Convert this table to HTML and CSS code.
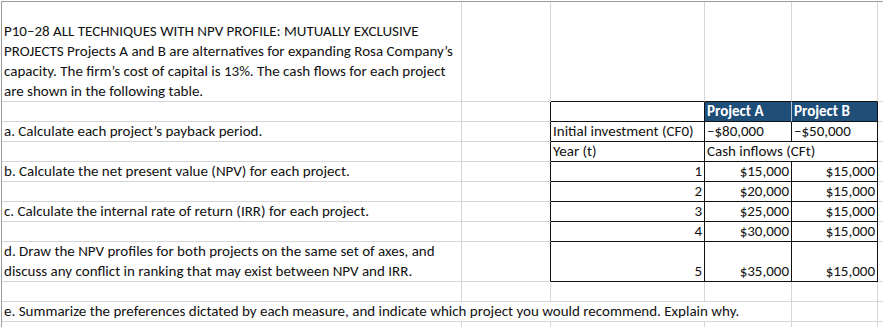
FILE: index.html
```html
<!DOCTYPE html>
<html>
<head>
<meta charset="utf-8">
<link rel="stylesheet" href="styles.css">
</head>
<body>
<div class="sheet">
  <!-- row 1 -->
  <div class="c wrap"><span>P10–28 ALL TECHNIQUES WITH NPV PROFILE: MUTUALLY EXCLUSIVE</span><span>PROJECTS Projects A and B are alternatives for expanding Rosa Company’s</span><span>capacity. The firm’s cost of capital is 13%. The cash flows for each project</span><span>are shown in the following table.</span></div>
  <div class="c"></div>
  <div class="c tb"></div>
  <div class="c tb"></div>
  <div class="c tb"></div>
  <div class="c"></div>
  <!-- row 2 -->
  <div class="c"></div>
  <div class="c tl"></div>
  <div class="c tt"></div>
  <div class="c tt head hsep">Project A</div>
  <div class="c tt tr head">Project B</div>
  <div class="c"></div>
  <!-- row 3 -->
  <div class="c">a. Calculate each project’s payback period.</div>
  <div class="c tl"></div>
  <div class="c tt">Initial investment (CF0)</div>
  <div class="c tt">–$80,000</div>
  <div class="c tt tr">–$50,000</div>
  <div class="c"></div>
  <!-- row 4 -->
  <div class="c"></div>
  <div class="c tl"></div>
  <div class="c tt">Year (t)</div>
  <div class="c tt tr span2">Cash inflows (CFt)</div>
  <div class="c"></div>
  <!-- row 5 -->
  <div class="c">b. Calculate the net present value (NPV) for each project.</div>
  <div class="c tl"></div>
  <div class="c tt num">1</div>
  <div class="c tt num">$15,000</div>
  <div class="c tt tr num">$15,000</div>
  <div class="c"></div>
  <!-- row 6 -->
  <div class="c"></div>
  <div class="c tl"></div>
  <div class="c tt num">2</div>
  <div class="c tt num">$20,000</div>
  <div class="c tt tr num">$15,000</div>
  <div class="c"></div>
  <!-- row 7 -->
  <div class="c">c. Calculate the internal rate of return (IRR) for each project.</div>
  <div class="c tl"></div>
  <div class="c tt num">3</div>
  <div class="c tt num">$25,000</div>
  <div class="c tt tr num">$15,000</div>
  <div class="c"></div>
  <!-- row 8 -->
  <div class="c"></div>
  <div class="c tl"></div>
  <div class="c tt num">4</div>
  <div class="c tt num">$30,000</div>
  <div class="c tt tr num">$15,000</div>
  <div class="c"></div>
  <!-- row 9 -->
  <div class="c wrap"><span>d. Draw the NPV profiles for both projects on the same set of axes, and</span><span>discuss any conflict in ranking that may exist between NPV and IRR.</span></div>
  <div class="c tl"></div>
  <div class="c tt num">5</div>
  <div class="c tt num">$35,000</div>
  <div class="c tt tr num">$15,000</div>
  <div class="c"></div>
  <!-- row 10 -->
  <div class="c"></div>
  <div class="c"></div>
  <div class="c"></div>
  <div class="c"></div>
  <div class="c"></div>
  <div class="c"></div>
  <!-- row 11 -->
  <div class="c span4">e. Summarize the preferences dictated by each measure, and indicate which project you would recommend. Explain why.</div>
  <div class="c"></div>
  <div class="c"></div>
  <!-- row 12 -->
  <div class="c"></div>
  <div class="c"></div>
  <div class="c"></div>
  <div class="c"></div>
  <div class="c"></div>
  <div class="c"></div>
</div>
</body>
</html>
```
FILE: styles.css
```css
html, body {
  margin: 0;
  padding: 0;
  background: #ffffff;
  overflow: hidden;
}

body {
  padding: 1px 0 0 1px;
  font-family: "Carlito", "Lato", "Liberation Sans", sans-serif;
  font-size: 15px;
  color: #111;
}

.sheet {
  display: grid;
  grid-template-columns: 460px 89px 154px 87px 86px 40px;
  grid-template-rows: 100px repeat(7, 20px) 40px 20px 20px 20px;
  border-top: 1px solid #9c9c9c;
  border-left: 1px solid #9c9c9c;
  width: max-content;
}

.c {
  box-sizing: border-box;
  border-right: 1px solid #d6d6d6;
  border-bottom: 1px solid #d6d6d6;
  display: flex;
  align-items: flex-end;
  padding: 0 2px 0 2px;
  line-height: 20px;
  white-space: nowrap;
  overflow: visible;
}

.wrap {
  flex-direction: column;
  justify-content: flex-end;
  align-items: flex-start;
}

.tb { border-bottom-color: #111; }
.tl { border-right-color: #111; }
.tt { border-right-color: #111; border-bottom-color: #111; }
.tr { border-right-color: #111; }

.head {
  background: #1f4e79;
  color: #ffffff;
  font-weight: 700;
}

.hsep { border-right-color: #b9c6d6; }

.num { justify-content: flex-end; }

.span2 { grid-column: span 2; }
.span4 { grid-column: span 4; }
```
